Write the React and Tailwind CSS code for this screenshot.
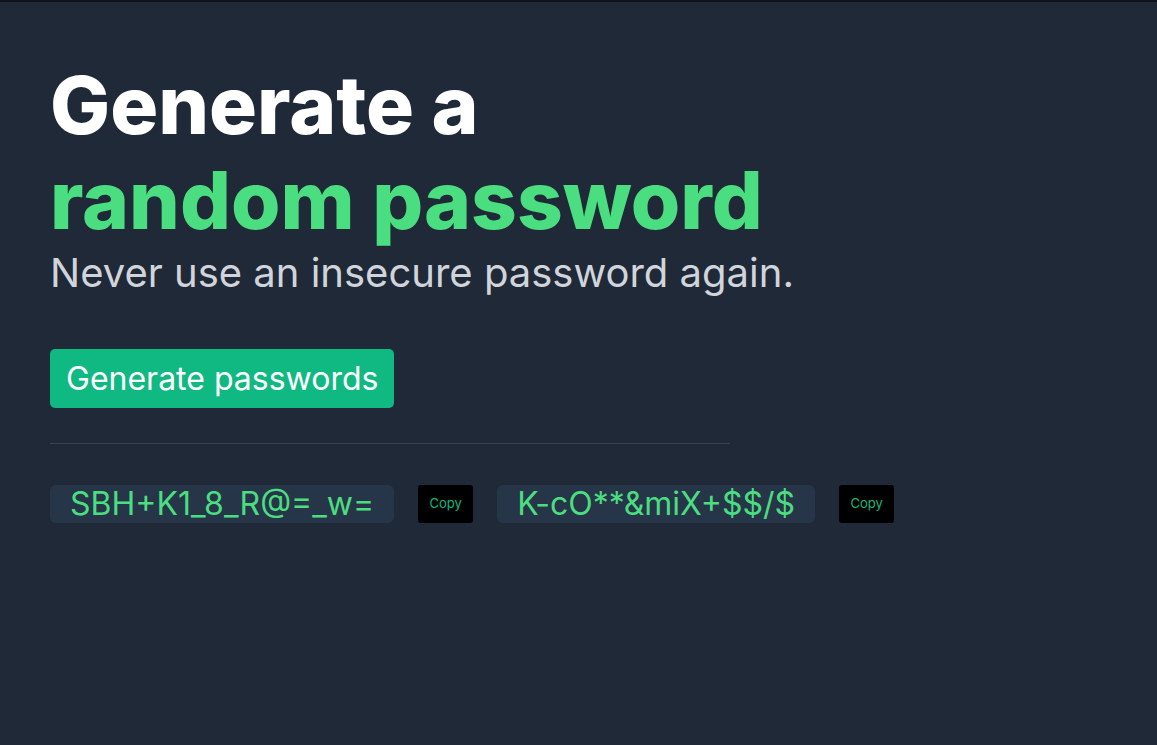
const passwords = ["SBH+K1_8_R@=_w=", "K-cO**&miX+$$/$"];

const PasswordField = ({ value }) => (
    <div className="flex items-center gap-6">
        <div className="h-[38px] flex items-center px-5 bg-[#273549] rounded-md text-[32px] text-[#4ade80] leading-none">
            {value}
        </div>
        <button className="h-[38px] w-[55px] bg-black rounded-[3px] text-[13px] text-[#10b981] flex items-center justify-center">
            Copy
        </button>
    </div>
);

const App = () => {
    return (
        <div
            className="min-h-[745px] bg-[#1f2937] border-t-2 border-[#101318] px-[50px] pt-[55px]"
            style={{ fontFamily: "Inter, 'Noto Sans', sans-serif" }}
        >
            <h1 className="text-[80px] font-extrabold leading-[95px] text-white">
                Generate a
                <span className="block text-[#4ade80]">random password</span>
            </h1>
            <p className="text-[40px] leading-[52px] text-[#d1d5db]">
                Never use an insecure password again.
            </p>

            <button className="mt-[50px] h-[59px] px-4 bg-[#10b981] rounded-[5px] text-[32px] text-white">
                Generate passwords
            </button>

            <div className="w-[680px] h-px bg-[#374151] mt-[35px] mb-[41px]" />

            <div className="flex gap-6">
                {passwords.map((p) => (
                    <PasswordField key={p} value={p} />
                ))}
            </div>
        </div>
    );
};

export default App;
